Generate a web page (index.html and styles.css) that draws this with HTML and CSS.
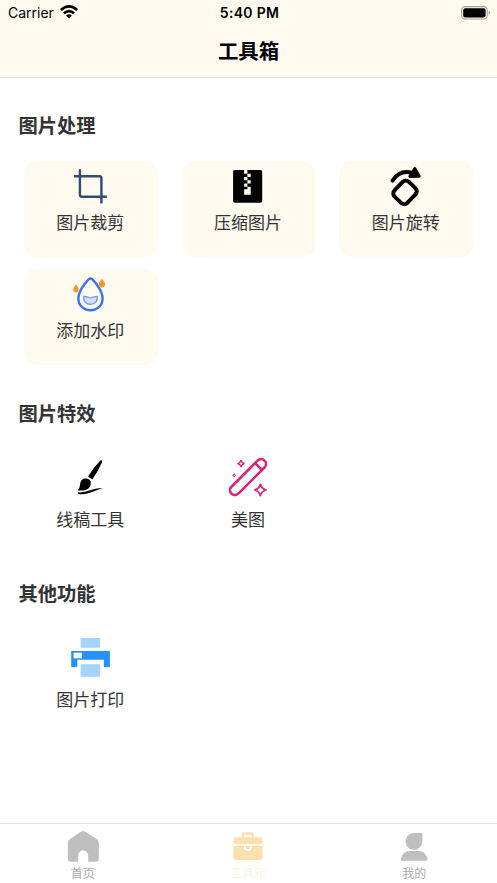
FILE: index.html
```html
<!DOCTYPE html>
<html lang="zh-CN">
<head>
<meta charset="utf-8">
<title>工具箱</title>
<link rel="stylesheet" href="styles.css">
</head>
<body>
<header class="header">
  <div class="status">
    <div class="carrier"><span>Carrier</span>
      <svg class="wifi" viewBox="0 0 18 14"><path d="M.9 5Q9-2.2 17.1 5M3.9 8.3Q9 3.9 14.1 8.3" fill="none" stroke="#000" stroke-width="2.6"/><path d="M6 10.5Q9 8.2 12 10.5L9 13.5Z"/></svg>
    </div>
    <div class="time">5:40 PM</div>
    <div class="battery">
      <svg viewBox="0 0 30 14"><rect x=".6" y=".6" width="25.6" height="12.4" rx="3.6" fill="none" stroke="#a5a29a" stroke-width="1.1"/><rect x="2.2" y="2.2" width="22.4" height="9.2" rx="2"/><path d="M27.6 4.8Q30.4 6.8 27.6 8.8Z" fill="#a5a29a"/></svg>
    </div>
  </div>
  <h1 class="title">工具箱</h1>
</header>

<main class="content">
  <section class="section">
    <h2 class="heading">图片处理</h2>
    <div class="grid">
      <div class="tile">
        <svg class="icon" viewBox="0 0 44 44"><path d="M10.9 4.3V29.8Q10.9 31.7 12.8 31.7H37.8M5 11.3H30.5Q32.4 11.3 32.4 13.2V38.6" fill="none" stroke="#304c6e" stroke-width="2.4"/></svg>
        <span class="label">图片裁剪</span>
      </div>
      <div class="tile">
        <svg class="icon" viewBox="0 0 44 44"><rect x="7.1" y="5" width="29.1" height="32.7" rx="1.7"/><path d="M18.1 5H21.4V8.7H24.7V12H21.4V15.3H24.7V18.6H21.4V21.7H24.7V29.7H18.1V24.3H21.4V21.7H18.1V18.6H21.4V15.3H18.1V12H21.4V8.7H18.1Z" fill="#fffaef"/></svg>
        <span class="label">压缩图片</span>
      </div>
      <div class="tile">
        <svg class="icon" viewBox="0 0 44 44"><path d="M8.5 15.6Q15.5 4.5 28 7.8" fill="none" stroke="#000" stroke-width="4" stroke-linecap="round"/><path d="M30.8 3.5L35.2 11.2L25.8 11.5Z" stroke="#000" stroke-width="3" stroke-linejoin="round"/><rect x="10.7" y="18.5" width="20.6" height="17.8" rx="4.4" transform="rotate(-46 21 27.4)" fill="none" stroke="#000" stroke-width="4"/></svg>
        <span class="label">图片旋转</span>
      </div>
      <div class="tile">
        <svg class="icon" viewBox="0 0 44 44"><path d="M19.6 6.4Q21.5 4.6 23.4 6.4C27.5 10.5 33.6 18.7 33.6 25.4C33.6 32.4 28.4 37.2 21.5 37.2S9.4 32.4 9.4 25.4C9.4 18.7 15.5 10.5 19.6 6.4Z" fill="none" stroke="#3b74f2" stroke-width="2.4"/><path d="M14.9 23.4Q18 23.4 21.5 25Q25 23.4 28.2 23.4C29.2 28 25.9 31.4 21.5 31.4S13.9 28 14.9 23.4Z" fill="#d3e0fc" stroke="#6d98f7" stroke-width="1.3"/><path d="M7 11.6C4.8 14 4.4 15.6 4.4 16.8A2.6 2.6 0 0 0 9.6 16.8C9.6 15.6 9 14 7 11.6ZM32.9 5.8C30.3 8.7 29.8 10.2 29.8 11.3A3.1 3.1 0 0 0 36 11.3C36 10.2 35.5 8.7 32.9 5.8Z" fill="#fc9a25"/></svg>
        <span class="label">添加水印</span>
      </div>
    </div>
  </section>

  <section class="section">
    <h2 class="heading">图片特效</h2>
    <div class="grid plain">
      <div class="tile">
        <svg class="icon" viewBox="0 0 44 44"><path d="M32.3 5.2Q33.8 5.3 33 7.3Q29.3 16 23.4 24.4L19 21.6Q24 13 30.9 6Q31.7 5.2 32.3 5.2Z"/><path d="M17.3 23.6Q21.8 24.2 21.8 28.3C21.5 34.3 16 36.5 8.6 35.2Q10.9 33.4 11 30.1C11.2 25.7 13.7 22.9 17.3 23.6Z"/><path d="M9.1 37.2C17 38.4 22 33.3 33.8 33.1C25 35.6 18 40.7 9.6 39Q8.1 38 9.1 37.2Z"/></svg>
        <span class="label">线稿工具</span>
      </div>
      <div class="tile">
        <svg class="icon" viewBox="0 0 44 44"><g fill="none" stroke="#d5267e"><g stroke-width="2.6"><rect x="-1.4" y="17.2" width="46.8" height="9.8" rx="4.9" transform="rotate(-45 22 22.1)"/><path d="M29.2 8.2L36 15"/></g><path d="M15 5.2Q15.6 8.1 18.5 8.7Q15.6 9.3 15 12.2Q14.4 9.3 11.5 8.7Q14.4 8.1 15 5.2Z" stroke-width="1.3"/><path d="M8.1 18.7Q8.3 20.1 9.7 20.3Q8.3 20.5 8.1 21.9Q7.9 20.5 6.5 20.3Q7.9 20.1 8.1 18.7Z" stroke-width="1"/><path d="M34.4 29.3Q35.6 33.8 40.1 35Q35.6 36.2 34.4 40.7Q33.2 36.2 28.7 35Q33.2 33.8 34.4 29.3Z" stroke-width="1.8" stroke-linejoin="round"/></g></svg>
        <span class="label">美图</span>
      </div>
    </div>
  </section>

  <section class="section">
    <h2 class="heading">其他功能</h2>
    <div class="grid plain">
      <div class="tile">
        <svg class="icon" viewBox="0 0 44 44"><path d="M11.6 3H31.2V12.8H11.6ZM11.6 29.2H31.2V41.7H11.6Z" fill="#a6d3fb"/><path d="M2.2 16H40.9V32H34.9V24.7H8.3V32H2.2Z" fill="#2492fc"/><path d="M4.6 17.7H12.9V23.3H4.6Z" fill="#fff"/></svg>
        <span class="label">图片打印</span>
      </div>
    </div>
  </section>
</main>

<nav class="tabs">
  <div class="tab">
    <svg class="tab-icon" viewBox="0 0 34 34"><path d="M15.4 2.6Q17.2 1.4 19 2.6L31 10.3Q32.8 11.5 32.8 13.6V29.7Q32.8 32.7 29.8 32.7H22.2V26.6A5 5 0 0 0 12.2 26.6V32.7H4.9Q1.9 32.7 1.9 29.7V13.6Q1.9 11.5 3.7 10.3Z" fill="#bfbfbf"/></svg>
    <span>首页</span>
  </div>
  <div class="tab active">
    <svg class="tab-icon" viewBox="0 0 34 34"><path d="M4.5 8.3H10.6V5Q10.6 3.3 12.3 3.3H21.2Q22.9 3.3 22.9 5V8.3H29.5Q31.5 8.3 31.5 10.3V29Q31.5 31 29.5 31H4.5Q2.5 31 2.5 29V10.3Q2.5 8.3 4.5 8.3ZM13 8.3H20.5V5.7H13Z" fill="#fce0ad" fill-rule="evenodd"/><path d="M2.5 15.9H31.5M13.7 16V18A3.1 3.1 0 0 0 19.9 18V16" fill="none" stroke="#fff" stroke-width="1.7"/></svg>
    <span>工具箱</span>
  </div>
  <div class="tab">
    <svg class="tab-icon" viewBox="0 0 34 34"><path d="M16.9 4H24Q25.4 4 25.4 5.4V12.3A8.45 8.4 0 1 1 16.9 4ZM12.5 22.1H21.8Q28.5 22.1 30.4 29.8Q30.8 31.7 28.9 31.7H5.4Q3.5 31.7 3.9 29.8Q5.8 22.1 12.5 22.1Z" fill="#bfbfbf"/></svg>
    <span>我的</span>
  </div>
</nav>
</body>
</html>
```
FILE: styles.css
```css
* { box-sizing: border-box; }

body {
  margin: 0;
  height: 883px;
  display: flex;
  flex-direction: column;
  overflow: hidden;
  background: #fff;
  color: #333;
  font-family: Inter, "Noto Sans CJK SC", sans-serif;
}

svg { display: block; }

.header {
  height: 78px;
  background: #fffaef;
  border-bottom: 1px solid #e3e0da;
  color: #000;
}

.status {
  height: 26px;
  padding: 0 6px 0 8px;
  display: grid;
  grid-template-columns: 1fr auto 1fr;
  align-items: center;
  font-size: 14px;
  line-height: 26px;
}

.carrier { display: flex; align-items: center; gap: 6px; }
.wifi { width: 18px; height: 14px; margin-bottom: 2px; }
.time { font-weight: 600; letter-spacing: .3px; }
.battery { justify-self: end; }
.battery svg { width: 30px; height: 14px; margin-bottom: 1px; }

.title {
  margin: 0;
  font-size: 20.4px;
  font-weight: 700;
  line-height: 52px;
  text-align: center;
}

.content { flex: 1; padding-top: 34px; }

.section { margin-bottom: 34px; }

.heading {
  margin: 0 0 21px 18.5px;
  font-size: 19.3px;
  font-weight: 700;
  line-height: 28px;
}

.section + .section { margin-top: 35px; }

.grid {
  display: grid;
  grid-template-columns: repeat(3, 1fr);
  gap: 12px 24px;
  padding: 0 24px;
}

.tile {
  height: 96px;
  padding-top: 4px;
  display: flex;
  flex-direction: column;
  align-items: center;
  border-radius: 13px;
  background: #fffaef;
}

.icon { width: 44px; height: 44px; }

.label {
  margin-right: 1px;
  font-size: 17px;
  line-height: 28px;
}

.plain .tile { padding-top: 6px; background: none; }
.plain .icon { margin-bottom: 7px; }

.tabs {
  height: 60px;
  display: grid;
  grid-template-columns: repeat(3, 1fr);
  border-top: 1px solid #dedede;
}

.tab {
  padding-top: 5px;
  display: flex;
  flex-direction: column;
  align-items: center;
  color: #aaa;
  font-size: 12px;
  line-height: 22px;
}

.tab-icon { width: 34px; height: 34px; }
.active { color: #fff5e5; }
```
